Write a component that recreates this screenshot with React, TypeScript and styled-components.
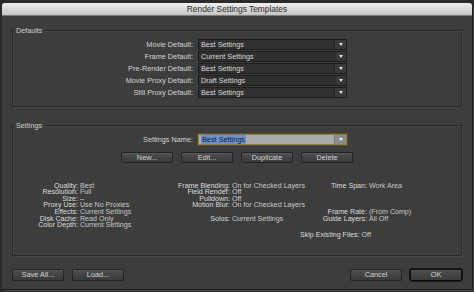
import React from 'react';
import styled, { createGlobalStyle } from 'styled-components';

const FONT = '"Liberation Sans", Arial, sans-serif';
const BODY = '#3d3d3d';

type Pair = [string, string] | null;

const defaults: [string, string][] = [
  ['Movie Default:', 'Best Settings'],
  ['Frame Default:', 'Current Settings'],
  ['Pre-Render Default:', 'Best Settings'],
  ['Movie Proxy Default:', 'Draft Settings'],
  ['Still Proxy Default:', 'Best Settings'],
];

const summary: Pair[][] = [
  [['Quality', 'Best'], ['Frame Blending', 'On for Checked Layers'], ['Time Span', 'Work Area']],
  [['Resolution', 'Full'], ['Field Render', 'Off'], null],
  [['Size', '–'], ['Pulldown', 'Off'], null],
  [['Proxy Use', 'Use No Proxies'], ['Motion Blur', 'On for Checked Layers'], null],
  [['Effects', 'Current Settings'], null, ['Frame Rate', '(From Comp)']],
  [['Disk Cache', 'Read Only'], ['Solos', 'Current Settings'], ['Guide Layers', 'All Off']],
  [['Color Depth', 'Current Settings'], null, null],
];

const GlobalStyle = createGlobalStyle`
  html, body {
    margin: 0;
    padding: 0;
    background: #2a2a2a;
  }
  body {
    font-family: ${FONT};
    width: 474px;
    height: 292px;
    overflow: hidden;
  }
`;

const Screen = styled.div`
  padding: 3px 2px 0 2px;
`;

const Window = styled.div`
  width: 470px;
  height: 286px;
  background: ${BODY};
  display: flex;
  flex-direction: column;
  box-shadow: 1px 1px 0 #1b1b1b, 2px 2px 0 #474747;
`;

const TitleBar = styled.div`
  flex: none;
  height: 12px;
  border-bottom: 1px solid #7c7c7c;
  border-radius: 3px 3px 0 0;
  background: linear-gradient(#efefef, #c4c4c4);
  display: flex;
  align-items: center;
  justify-content: center;
  font-size: 8.4px;
  color: #2c2c2c;
`;

const Content = styled.div`
  flex: 1;
  padding: 0 10px;
  display: flex;
  flex-direction: column;
`;

const Group = styled.fieldset<{ $top: number; $bottom: number }>`
  margin: ${p => p.$top}px 0 0;
  padding: 0 0 ${p => p.$bottom}px;
  min-width: 0;
  border: 1px solid #2a2a2a;
  box-shadow: inset 1px 1px 0 #464646, 1px 1px 0 #464646;
`;

const Legend = styled.legend`
  padding: 0 3px;
  font-size: 7.2px;
  line-height: 9px;
  color: #d0d0d0;
  background: ${BODY};
`;

const FormGrid = styled.div`
  display: grid;
  grid-template-columns: 180px 149px;
  column-gap: 5px;
  row-gap: 1px;
  padding-top: 4px;
`;

const FieldLabel = styled.span`
  text-align: right;
  font-size: 7.3px;
  line-height: 11px;
  color: #d4d4d4;
  white-space: nowrap;
`;

const Select = styled.div<{ $active?: boolean }>`
  height: 11px;
  box-sizing: border-box;
  display: flex;
  border: 1px solid ${p => (p.$active ? '#8f7d3e' : '#1d1d1d')};
  background: ${p => (p.$active ? '#aaaaaa' : '#303030')};
  box-shadow: ${p => (p.$active ? '0 0 0 1px #5a4f2a' : 'none')};
`;

const SelectValue = styled.span`
  flex: 1;
  padding-left: 2px;
  font-size: 7.3px;
  line-height: 9px;
  color: #d6d6d6;
  white-space: nowrap;
  overflow: hidden;
`;

const Highlight = styled.span`
  display: inline-block;
  padding: 0 1px;
  background: #6f8fc9;
  color: #0c1a3d;
`;

const ArrowBox = styled.span<{ $active?: boolean }>`
  width: 11px;
  display: flex;
  align-items: center;
  justify-content: center;
  border-left: 1px solid ${p => (p.$active ? '#7c7c7c' : '#262626')};
  background: ${p => (p.$active ? '#8d8d8d' : '#383838')};

  &::after {
    content: '';
    border-left: 2px solid transparent;
    border-right: 2px solid transparent;
    border-top: 3px solid ${p => (p.$active ? '#f0f0f0' : '#dcdcdc')};
  }
`;

const ButtonRow = styled.div<{ $top: number }>`
  display: flex;
  justify-content: center;
  gap: 8px;
  margin-top: ${p => p.$top}px;
`;

const Button = styled.button<{ $h?: number; $primary?: boolean }>`
  width: 52px;
  height: ${p => p.$h ?? 11}px;
  padding: 0;
  font-family: ${FONT};
  font-size: 7.3px;
  color: #d2d2d2;
  background: linear-gradient(#4e4e4e, #3a3a3a);
  border: 1px solid ${p => (p.$primary ? '#0e0e0e' : '#232323')};
  border-radius: 2px;
  box-shadow: ${p =>
    p.$primary ? '0 0 0 1px #1a1a1a, inset 0 1px 0 #585858' : 'inset 0 1px 0 #585858'};
`;

const InfoGrid = styled.div<{ $top: number }>`
  display: grid;
  grid-template-columns: 65px 50px 98px 66px 67px 1fr;
  column-gap: 2px;
  grid-auto-rows: 6.6px;
  margin-top: ${p => p.$top}px;
  font-size: 7.1px;
  line-height: 6.6px;
  white-space: nowrap;
`;

const SkipLine = styled.div`
  display: flex;
  gap: 2px;
  margin-top: 2.8px;
  padding-left: 287px;
  font-size: 7.1px;
  line-height: 6.6px;
  white-space: nowrap;
`;

const Key = styled.span`
  text-align: right;
  color: #dcdcdc;
`;

const Val = styled.span`
  color: #c8c8c8;
`;

const Footer = styled.div`
  display: flex;
  justify-content: space-between;
  margin-top: 13px;
`;

const ButtonGroup = styled.div`
  display: flex;
  gap: 8px;
`;

const Dropdown = ({ value, active }: { value: string; active?: boolean }) => (
  <Select $active={active}>
    <SelectValue>{active ? <Highlight>{value}</Highlight> : value}</SelectValue>
    <ArrowBox $active={active} />
  </Select>
);

const Cells = ({ pair }: { pair: Pair }) =>
  pair ? (
    <>
      <Key>{pair[0]}:</Key>
      <Val>{pair[1]}</Val>
    </>
  ) : (
    <>
      <span />
      <span />
    </>
  );

export default function App() {
  return (
    <>
      <GlobalStyle />
      <Screen>
        <Window>
          <TitleBar>Render Settings Templates</TitleBar>
          <Content>
            <Group $top={10} $bottom={8}>
              <Legend>Defaults</Legend>
              <FormGrid>
                {defaults.map(([label, value]) => (
                  <React.Fragment key={label}>
                    <FieldLabel>{label}</FieldLabel>
                    <Dropdown value={value} />
                  </React.Fragment>
                ))}
              </FormGrid>
            </Group>

            <Group $top={13.5} $bottom={16.7}>
              <Legend>Settings</Legend>
              <FormGrid>
                <FieldLabel>Settings Name:</FieldLabel>
                <Dropdown value="Best Settings" active />
              </FormGrid>
              <ButtonRow $top={7.5}>
                <Button>New...</Button>
                <Button>Edit...</Button>
                <Button>Duplicate</Button>
                <Button>Delete</Button>
              </ButtonRow>
              <InfoGrid $top={19.7}>
                {summary.map((row, i) => (
                  <React.Fragment key={i}>
                    {row.map((pair, j) => (
                      <Cells key={j} pair={pair} />
                    ))}
                  </React.Fragment>
                ))}
              </InfoGrid>
              <SkipLine>
                <Key>Skip Existing Files:</Key>
                <Val>Off</Val>
              </SkipLine>
            </Group>

            <Footer>
              <ButtonGroup>
                <Button $h={12}>Save All...</Button>
                <Button $h={12}>Load...</Button>
              </ButtonGroup>
              <ButtonGroup>
                <Button $h={12}>Cancel</Button>
                <Button $h={12} $primary>
                  OK
                </Button>
              </ButtonGroup>
            </Footer>
          </Content>
        </Window>
      </Screen>
    </>
  );
}
